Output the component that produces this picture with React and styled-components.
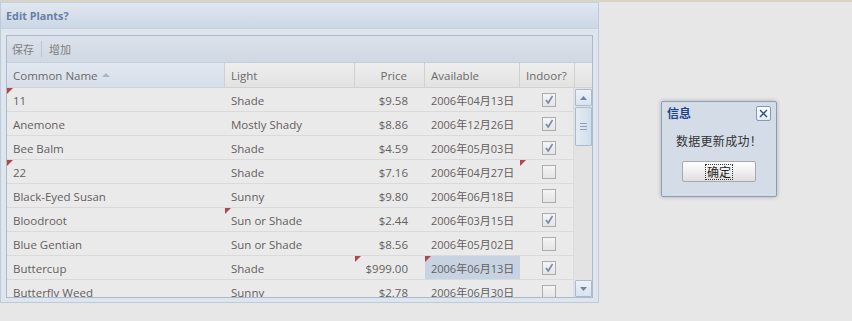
import React from "react";
import styled, { createGlobalStyle, css } from "styled-components";

const Global = createGlobalStyle`
  html, body { margin: 0; padding: 0; background: #e7e7e7; }
  body { font-family: "Open Sans", "Noto Sans CJK SC", sans-serif; font-size: 11.5px; }
`;

const Page = styled.div`
  position: relative;
  width: 852px;
  height: 321px;
  overflow: hidden;
  border-top: 2px solid #d8d3c4;
  box-sizing: border-box;
  background: #e7e7e7;
`;

const Panel = styled.div`
  width: 599px;
  height: 301px;
  box-sizing: border-box;
  border: 1px solid #bccadb;
  border-top: 1px solid #c5d2e2;
  display: flex;
  flex-direction: column;
  background: #dfe5ed;
`;

const PanelHeader = styled.div`
  height: 25px;
  display: flex;
  align-items: center;
  padding-left: 5px;
  font-weight: bold;
  font-size: 10.8px;
  color: #6a7ea6;
  background: linear-gradient(#e0e7f0, #ccd7e5);
  border-bottom: 1px solid #c6d2e1;
`;

const PanelBody = styled.div`
  flex: 1;
  padding: 6px 5px 4px 5px;
  display: flex;
  min-height: 0;
`;

const GridFrame = styled.div`
  flex: 1;
  border: 1px solid #a9b9cf;
  display: flex;
  flex-direction: column;
  background: #eaeaea;
  overflow: hidden;
`;

const Toolbar = styled.div`
  height: 26px;
  display: flex;
  align-items: center;
  padding-left: 5px;
  background: linear-gradient(#dbe2eb, #d0d8e3);
  border-bottom: 1px solid #c4cfdc;
  color: #808080;
`;

const ToolButton = styled.span`
  font-family: "Noto Sans CJK SC", sans-serif;
  font-size: 11px;
`;

const ToolSep = styled.span`
  width: 1px;
  height: 16px;
  background: #b9c4d2;
  margin: 0 7px 0 7px;
`;

const COLS = "218px 130px 70px 95px 55px 19px";

const HeaderRow = styled.div`
  display: grid;
  grid-template-columns: ${COLS};
  height: 24px;
  border-bottom: 1px solid #d2d2d2;
  background: linear-gradient(#eeeeee, #e2e2e2);
`;

const HeaderCell = styled.div`
  display: flex;
  align-items: center;
  justify-content: ${(p) => (p.$right ? "flex-end" : "flex-start")};
  padding: ${(p) => (p.$right ? "0 17px 0 0" : "0 0 0 6px")};
  color: #6a6a6a;
  border-right: 1px solid #d0d0d0;
  background: ${(p) => (p.$sorted ? "linear-gradient(#e2e8f0, #d6dee9)" : "transparent")};
  ${(p) => p.$last && css`border-right: none;`}
`;

const SortArrow = styled.span`
  display: inline-block;
  width: 0;
  height: 0;
  margin-left: 4px;
  margin-top: -1px;
  border-left: 4px solid transparent;
  border-right: 4px solid transparent;
  border-bottom: 4px solid #aab3c1;
`;

const BodyArea = styled.div`
  flex: 1;
  display: flex;
  min-height: 0;
`;

const Rows = styled.div`
  width: 568px;
  overflow: hidden;
`;

const Row = styled.div`
  display: grid;
  grid-template-columns: 218px 130px 70px 95px 55px;
  height: 23px;
  border-bottom: 1px solid #dadada;
`;

const Cell = styled.div`
  position: relative;
  display: flex;
  align-items: center;
  justify-content: ${(p) => (p.$align === "right" ? "flex-end" : p.$align === "center" ? "center" : "flex-start")};
  padding: ${(p) => (p.$align === "right" ? "1px 17px 0 0" : p.$align === "center" ? "0" : "1px 0 0 6px")};
  color: #656060;
  white-space: nowrap;
  font-size: ${(p) => (p.$date ? "11px" : "11.5px")};
  background: ${(p) => (p.$selected ? "#c7d3e2" : "transparent")};
  ${(p) =>
    p.$dirty &&
    css`
      &::before {
        content: "";
        position: absolute;
        left: 0;
        top: 0;
        border-top: 6px solid #b4454a;
        border-right: 6px solid transparent;
      }
    `}
`;

const CheckBox = styled.span`
  width: 12px;
  height: 12px;
  border: 1px solid #acacac;
  background: linear-gradient(#f5f5f5, #e4e4e4);
  display: flex;
  align-items: center;
  justify-content: center;
  margin-left: 2px;
`;

const Scrollbar = styled.div`
  width: 19px;
  display: flex;
  flex-direction: column;
  align-items: center;
  background: #e3e3e3;
  border-left: 1px solid #dcdcdc;
  box-sizing: border-box;
  padding-top: 1px;
`;

const ScrollBtn = styled.div`
  width: 15px;
  height: 15px;
  border: 1px solid #a9bad1;
  border-radius: 1px;
  background: linear-gradient(#eef2f7, #d9e2ee);
  display: flex;
  align-items: center;
  justify-content: center;
`;

const Thumb = styled.div`
  width: 15px;
  height: 37px;
  margin-top: 1px;
  border: 1px solid #a9bad1;
  border-radius: 1px;
  background: linear-gradient(90deg, #e4eaf2, #d3deec);
  display: flex;
  flex-direction: column;
  align-items: center;
  justify-content: center;
  gap: 2px;
`;

const Grip = styled.span`
  width: 7px;
  height: 1px;
  background: #8d9fba;
`;

const Track = styled.div`
  flex: 1;
`;

const Dialog = styled.div`
  position: absolute;
  left: 661px;
  top: 99px;
  width: 116px;
  height: 96px;
  box-sizing: border-box;
  border: 1px solid #8c9db6;
  border-radius: 2px;
  background: #d4dce7;
  box-shadow: 0 0 4px rgba(0, 0, 0, 0.25);
  display: flex;
  flex-direction: column;
  font-family: "Noto Sans CJK SC", sans-serif;
`;

const DialogHeader = styled.div`
  height: 20px;
  display: flex;
  align-items: center;
  justify-content: space-between;
  padding: 0 5px 0 5px;
`;

const DialogTitle = styled.span`
  font-weight: bold;
  font-size: 12px;
  color: #1c4589;
`;

const CloseBtn = styled.span`
  width: 13px;
  height: 13px;
  border: 1px solid #7f98bd;
  border-radius: 2px;
  background: linear-gradient(#ffffff, #e7edf5);
  display: flex;
  align-items: center;
  justify-content: center;
  margin-top: 2px;
`;

const DialogMsg = styled.div`
  text-align: center;
  margin-top: 11px;
  line-height: 16px;
  color: #333;
  font-size: 12px;
  letter-spacing: 0.3px;
`;

const DialogBtn = styled.div`
  margin: 12px auto 0 auto;
  width: 72px;
  height: 19px;
  border: 1px solid #a9a9a9;
  border-radius: 2px;
  background: linear-gradient(#fdfdfd 0%, #f0f0f0 50%, #dedede 100%);
  display: flex;
  align-items: center;
  justify-content: center;
`;

const BtnLabel = styled.span`
  font-size: 12px;
  color: #222;
  outline: 1px dotted #333;
  line-height: 14px;
  padding: 0 1px;
`;

const data = [
  { n: "11", l: "Shade", p: "$9.58", a: "2006年04月13日", i: true, d: ["n"] },
  { n: "Anemone", l: "Mostly Shady", p: "$8.86", a: "2006年12月26日", i: true, d: [] },
  { n: "Bee Balm", l: "Shade", p: "$4.59", a: "2006年05月03日", i: true, d: [] },
  { n: "22", l: "Shade", p: "$7.16", a: "2006年04月27日", i: false, d: ["n", "i"] },
  { n: "Black-Eyed Susan", l: "Sunny", p: "$9.80", a: "2006年06月18日", i: false, d: [] },
  { n: "Bloodroot", l: "Sun or Shade", p: "$2.44", a: "2006年03月15日", i: true, d: ["l"] },
  { n: "Blue Gentian", l: "Sun or Shade", p: "$8.56", a: "2006年05月02日", i: false, d: [] },
  { n: "Buttercup", l: "Shade", p: "$999.00", a: "2006年06月13日", i: true, d: ["p", "a"], sel: "a" },
  { n: "Butterfly Weed", l: "Sunny", p: "$2.78", a: "2006年06月30日", i: false, d: [] },
];

const Check = () => (
  <svg width="10" height="10" viewBox="0 0 10 10">
    <path d="M2 5 L4.2 8 L8.5 1" fill="none" stroke="#7889a2" strokeWidth="1.6" />
  </svg>
);

export default function App() {
  return (
    <Page>
      <Global />
      <Panel>
        <PanelHeader>Edit Plants?</PanelHeader>
        <PanelBody>
          <GridFrame>
            <Toolbar>
              <ToolButton>保存</ToolButton>
              <ToolSep />
              <ToolButton>增加</ToolButton>
            </Toolbar>
            <HeaderRow>
              <HeaderCell $sorted>
                Common Name<SortArrow />
              </HeaderCell>
              <HeaderCell>Light</HeaderCell>
              <HeaderCell $right>Price</HeaderCell>
              <HeaderCell>Available</HeaderCell>
              <HeaderCell>Indoor?</HeaderCell>
              <HeaderCell $last />
            </HeaderRow>
            <BodyArea>
              <Rows>
                {data.map((r) => (
                  <Row key={r.n}>
                    <Cell $dirty={r.d.includes("n")}>{r.n}</Cell>
                    <Cell $dirty={r.d.includes("l")}>{r.l}</Cell>
                    <Cell $align="right" $dirty={r.d.includes("p")}>{r.p}</Cell>
                    <Cell $date $dirty={r.d.includes("a")} $selected={r.sel === "a"}>{r.a}</Cell>
                    <Cell $align="center" $dirty={r.d.includes("i")}>
                      <CheckBox>{r.i && <Check />}</CheckBox>
                    </Cell>
                  </Row>
                ))}
              </Rows>
              <Scrollbar>
                <ScrollBtn>
                  <svg width="7" height="4" viewBox="0 0 7 4">
                    <path d="M0 4 L3.5 0 L7 4 Z" fill="#6f84a6" />
                  </svg>
                </ScrollBtn>
                <Thumb>
                  <Grip />
                  <Grip />
                  <Grip />
                </Thumb>
                <Track />
                <ScrollBtn>
                  <svg width="7" height="4" viewBox="0 0 7 4">
                    <path d="M0 0 L7 0 L3.5 4 Z" fill="#6f84a6" />
                  </svg>
                </ScrollBtn>
              </Scrollbar>
            </BodyArea>
          </GridFrame>
        </PanelBody>
      </Panel>
      <Dialog>
        <DialogHeader>
          <DialogTitle>信息</DialogTitle>
          <CloseBtn>
            <svg width="9" height="9" viewBox="0 0 9 9">
              <path d="M1 1 L8 8 M8 1 L1 8" stroke="#2a4f8c" strokeWidth="1.4" />
            </svg>
          </CloseBtn>
        </DialogHeader>
        <DialogMsg>数据更新成功！</DialogMsg>
        <DialogBtn>
          <BtnLabel>确定</BtnLabel>
        </DialogBtn>
      </Dialog>
    </Page>
  );
}
